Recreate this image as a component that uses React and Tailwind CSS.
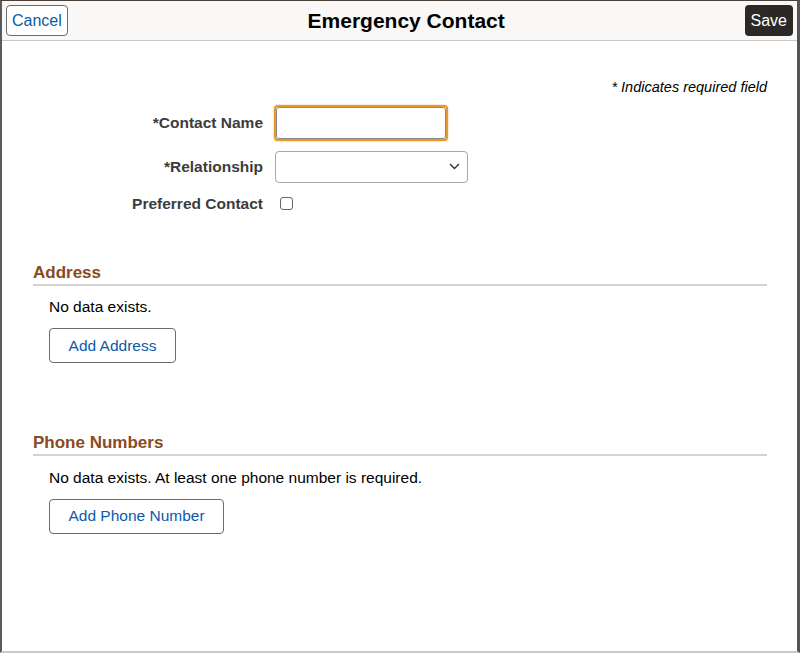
import React from 'react';

const font = { fontFamily: '"Liberation Sans", Arial, sans-serif' };

function Section({ title, children }) {
  return (
    <div className="ml-[31px] mr-[30px]">
      <h2 className="text-[17px] font-bold text-[#8b4a1e] leading-[22px] border-b-2 border-[#d6d4d2]">{title}</h2>
      <div className="pl-[16px]">{children}</div>
    </div>
  );
}

export default function App() {
  return (
    <div style={font} className="h-[653px] bg-white border-t border-t-[#4a4038] border-l-2 border-l-[#5a5a5a] border-r-[3px] border-r-[#555] border-b-2 border-b-[#c8c8c8] flex flex-col overflow-hidden">
      {/* header */}
      <div className="h-[40px] shrink-0 bg-[#f9f8f7] border-b border-[#c9c7c5] flex items-center justify-between px-[4px]">
        <button className="h-[31px] px-[5px] rounded-[4px] border border-[#6b6b6b] bg-white text-[#0a5aa8] text-[16px]">Cancel</button>
        <h1 className="text-[21px] font-bold text-black pt-[1px]">Emergency Contact</h1>
        <button className="h-[31px] px-[6px] rounded-[4px] bg-[#2b2826] text-white text-[16px]">Save</button>
      </div>

      {/* form */}
      <div className="pt-[36px] pr-[30px] flex justify-end">
        <p className="text-[14.5px] italic text-black">* Indicates required field</p>
      </div>

      <div className="mt-[6px] flex flex-col gap-[10px]">
        <div className="flex items-center">
          <label className="w-[261px] text-right text-[15.5px] font-bold text-[#3c3c3c]">*Contact Name</label>
          <div className="ml-[11px] w-[174px] h-[36px] rounded-[4px] border-2 border-[#e8972c] bg-white shadow-[0_0_2px_#f0b060]">
            <div className="w-full h-full rounded-[3px] border border-[#8a8a8a]" />
          </div>
        </div>
        <div className="flex items-center">
          <label className="w-[261px] text-right text-[15.5px] font-bold text-[#3c3c3c]">*Relationship</label>
          <div className="ml-[12px] w-[193px] h-[32px] rounded-[4px] border border-[#a8a8a8] bg-white flex items-center justify-end pr-[7px]">
            <svg width="11" height="7" viewBox="0 0 11 7" fill="none" stroke="#333" strokeWidth="1.4">
              <path d="M1 1l4.5 4.5L10 1" />
            </svg>
          </div>
        </div>
        <div className="flex items-center mt-[-1px]">
          <label className="w-[261px] text-right text-[15.5px] font-bold text-[#3c3c3c]">Preferred Contact</label>
          <div className="ml-[17px] w-[13px] h-[13px] rounded-[3px] border border-[#666] bg-white" />
        </div>
      </div>

      <div className="mt-[47px]">
        <Section title="Address">
          <p className="mt-[9px] text-[15.5px] text-black">No data exists.</p>
          <button className="mt-[10px] h-[35px] w-[127px] rounded-[4px] border border-[#6b6b6b] bg-white text-[#0a5aa8] text-[15.5px]">Add Address</button>
        </Section>
      </div>

      <div className="mt-[69px]">
        <Section title="Phone Numbers">
          <p className="mt-[10px] text-[15.5px] text-black">No data exists. At least one phone number is required.</p>
          <button className="mt-[9px] h-[35px] w-[175px] rounded-[4px] border border-[#6b6b6b] bg-white text-[#0a5aa8] text-[15.5px]">Add Phone Number</button>
        </Section>
      </div>
    </div>
  );
}
